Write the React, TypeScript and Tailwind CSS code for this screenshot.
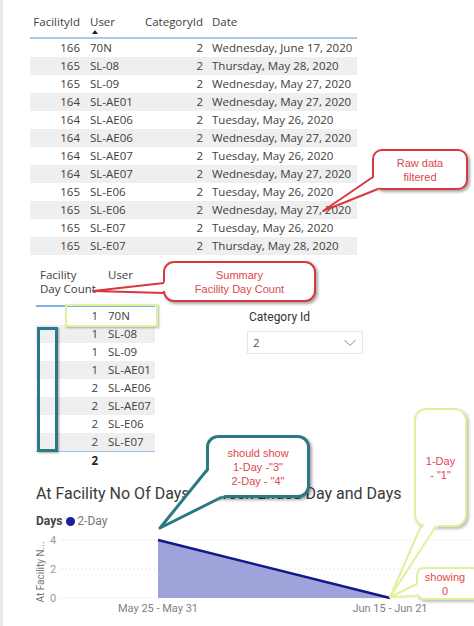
import React from "react";

const raw: string[][] = [
  ["166", "70N", "2", "Wednesday, June 17, 2020"],
  ["165", "SL-08", "2", "Thursday, May 28, 2020"],
  ["165", "SL-09", "2", "Wednesday, May 27, 2020"],
  ["164", "SL-AE01", "2", "Wednesday, May 27, 2020"],
  ["164", "SL-AE06", "2", "Tuesday, May 26, 2020"],
  ["164", "SL-AE06", "2", "Wednesday, May 27, 2020"],
  ["164", "SL-AE07", "2", "Tuesday, May 26, 2020"],
  ["164", "SL-AE07", "2", "Wednesday, May 27, 2020"],
  ["165", "SL-E06", "2", "Tuesday, May 26, 2020"],
  ["165", "SL-E06", "2", "Wednesday, May 27, 2020"],
  ["165", "SL-E07", "2", "Tuesday, May 26, 2020"],
  ["165", "SL-E07", "2", "Thursday, May 28, 2020"],
];

const summary: string[][] = [
  ["1", "70N"],
  ["1", "SL-08"],
  ["1", "SL-09"],
  ["1", "SL-AE01"],
  ["2", "SL-AE06"],
  ["2", "SL-AE07"],
  ["2", "SL-E06"],
  ["2", "SL-E07"],
];

function Tail({
  b1,
  b2,
  apex,
  color,
  width,
}: {
  b1: [number, number];
  b2: [number, number];
  apex: [number, number];
  color: string;
  width: number;
}) {
  return (
    <g>
      <polygon
        points={`${b1[0] + 3},${b1[1] - 1} ${apex[0]},${apex[1]} ${b2[0] + 3},${b2[1] - 2}`}
        fill="#ffffff"
      />
      <polyline
        points={`${b1[0]},${b1[1]} ${apex[0]},${apex[1]} ${b2[0]},${b2[1]}`}
        fill="none"
        stroke={color}
        strokeWidth={width}
        strokeLinejoin="round"
      />
    </g>
  );
}

export default function App() {
  return (
    <div className="relative w-[474px] h-[626px] overflow-hidden bg-white flex font-['Open_Sans',sans-serif] text-[#404040]">
      <div className="w-[3px] h-full bg-[#e8e8e8] shrink-0" />
      <div className="flex flex-col flex-1">
        {/* Raw data table */}
        <div className="ml-[27px] pt-[12px] w-[327px] text-[11.5px]">
          <div className="grid grid-cols-[54px_56px_68px_149px] h-[25px] leading-[16px] pt-[2px]">
            <div className="text-right pr-[4px]">FacilityId</div>
            <div className="pl-[6px] flex flex-col">
              <span>User</span>
              <span className="ml-[2px] w-0 h-0 border-l-[3px] border-r-[3px] border-b-[4px] border-l-transparent border-r-transparent border-b-[#222]" />
            </div>
            <div className="text-right pr-[5px]">CategoryId</div>
            <div className="pl-[4px]">Date</div>
          </div>
          <div className="h-[2px] bg-[#a9c9e8]" />
          {raw.map((r, i) => (
            <div
              key={i}
              className={`grid grid-cols-[54px_56px_68px_149px] h-[18px] leading-[18px] ${
                i % 2 === 1 ? "bg-[#efefef]" : "bg-white"
              }`}
            >
              <div className="text-right pr-[4px]">{r[0]}</div>
              <div className="pl-[6px]">{r[1]}</div>
              <div className="text-right pr-[5px]">{r[2]}</div>
              <div className="pl-[4px] whitespace-nowrap">{r[3]}</div>
            </div>
          ))}
        </div>

        {/* Summary table + slicer */}
        <div className="flex mt-[11px]">
          <div className="ml-[33px] w-[119px] text-[11.5px]">
            <div className="grid grid-cols-[67px_52px] h-[39px] leading-[14px] pt-[2px]">
              <div className="pl-[4px]">
                Facility
                <br />
                Day Count
              </div>
              <div className="pl-[5px]">User</div>
            </div>
            <div className="h-[2px] bg-[#7fb2e2]" />
            {summary.map((r, i) => (
              <div
                key={i}
                className={`grid grid-cols-[67px_52px] h-[18px] leading-[18px] ${
                  i % 2 === 1 ? "bg-[#efefef]" : "bg-white"
                }`}
              >
                <div className="text-right pr-[5px]">{r[0]}</div>
                <div className="pl-[5px]">{r[1]}</div>
              </div>
            ))}
            <div className="h-[1px] bg-[#9cc3e5]" />
            <div className="grid grid-cols-[67px_52px] h-[18px] leading-[18px] font-bold text-[#222]">
              <div className="text-right pr-[5px]">2</div>
              <div />
            </div>
          </div>
          <div className="ml-[92px] mt-[43px] flex flex-col">
            <div className="text-[12px] leading-[16px] font-['Roboto',sans-serif] text-[#333] pl-[2px]">
              Category Id
            </div>
            <div className="mt-[6px] w-[116px] h-[23px] border border-[#e6e6e6] flex items-center justify-between pl-[5px] pr-[6px] text-[11.5px] text-[#555]">
              <span>2</span>
              <svg width="12" height="8" viewBox="0 0 12 8">
                <path d="M0.5 1 L6 6.5 L11.5 1" fill="none" stroke="#8a8a8a" strokeWidth="1" />
              </svg>
            </div>
          </div>
        </div>

        {/* Chart */}
        <div className="ml-[33px] mt-[14px] flex flex-col">
          <div className="text-[16px] leading-[20px] font-['Roboto',sans-serif] text-[#3a3a3a] whitespace-nowrap">
            At Facility No Of Days by Week Ended Day and Days
          </div>
          <div className="mt-[9px] h-[16px] flex items-center text-[12px] font-['Roboto',sans-serif]">
            <span className="font-bold text-[#444]">Days</span>
            <span className="ml-[4px] w-[9px] h-[9px] rounded-full bg-[#1b1f9a]" />
            <span className="ml-[2px] text-[#777]">2-Day</span>
          </div>
          <svg width="438" height="98" className="mt-[-1px]">
            <text
              x="0"
              y="0"
              transform="translate(8 44) rotate(-90)"
              textAnchor="middle"
              fontSize="10"
              fill="#777"
              fontFamily="Roboto, sans-serif"
            >
              At Facility N...
            </text>
            {[
              [12, "4"],
              [41, "2"],
              [70, "0"],
            ].map(([y, l]) => (
              <g key={l as string}>
                <line
                  x1="26"
                  x2="438"
                  y1={y as number}
                  y2={y as number}
                  stroke="#d2d2d2"
                  strokeWidth="1"
                  strokeDasharray="1 3"
                />
                <text
                  x="17"
                  y={(y as number) + 4}
                  textAnchor="middle"
                  fontSize="11"
                  fill="#999"
                  fontFamily="Roboto, sans-serif"
                >
                  {l}
                </text>
              </g>
            ))}
            <polygon points="122,12 354,70 122,70" fill="#9ea3da" />
            <line x1="122" y1="12" x2="354" y2="70" stroke="#16168c" strokeWidth="2.5" />
            <text x="122" y="84" textAnchor="middle" fontSize="11" fill="#808080" fontFamily="Roboto, sans-serif">
              May 25 - May 31
            </text>
            <text x="354" y="84" textAnchor="middle" fontSize="11" fill="#808080" fontFamily="Roboto, sans-serif">
              Jun 15 - Jun 21
            </text>
          </svg>
        </div>
      </div>

      {/* Annotation overlays */}
      <div className="absolute left-[65px] top-[304px] w-[93px] h-[23px] border-2 border-[#e2f09e] shadow-[1px_1px_2px_rgba(0,0,0,0.3)]" />
      <div className="absolute left-[37px] top-[327px] w-[21px] h-[125px] border-[3px] border-[#2b7983] shadow-[1px_1px_2px_rgba(0,0,0,0.35)]" />

      <div className="absolute left-[372px] top-[149px] w-[96px] h-[41px] rounded-[10px] border-2 border-[#d8383e] bg-white shadow-[2px_2px_3px_rgba(0,0,0,0.35)] flex flex-col items-center justify-center text-[11px] leading-[14px] text-[#e0474c] font-['Liberation_Sans',Arial,sans-serif]">
        <span>Raw data</span>
        <span>filtered</span>
      </div>

      <div className="absolute left-[163px] top-[261px] w-[153px] h-[41px] rounded-[11px] border-2 border-[#d8383e] bg-white shadow-[2px_2px_3px_rgba(0,0,0,0.35)] flex flex-col items-center justify-center text-[11px] leading-[14px] text-[#e0474c] font-['Liberation_Sans',Arial,sans-serif]">
        <span>Summary</span>
        <span>Facility Day Count</span>
      </div>

      <div className="absolute left-[206px] top-[435px] w-[104px] h-[63px] rounded-[12px] border-[3px] border-[#2b7983] bg-white shadow-[2px_2px_3px_rgba(0,0,0,0.35)] flex flex-col items-center justify-center text-[11px] leading-[14px] text-[#e0474c] font-['Liberation_Sans',Arial,sans-serif]">
        <span>should show</span>
        <span>1-Day -"3"</span>
        <span>2-Day - "4"</span>
      </div>

      <div className="absolute left-[414px] top-[408px] w-[53px] h-[119px] rounded-[12px] border-2 border-[#e2f09e] bg-white shadow-[2px_2px_3px_rgba(0,0,0,0.25)] flex flex-col items-center justify-center text-[11px] leading-[14px] text-[#e0474c] font-['Liberation_Sans',Arial,sans-serif]">
        <span>1-Day</span>
        <span>- "1"</span>
      </div>

      <div className="absolute left-[416px] top-[567px] w-[64px] h-[33px] rounded-[8px] border-2 border-[#e2f09e] bg-white shadow-[2px_2px_3px_rgba(0,0,0,0.25)] flex flex-col items-center justify-center pr-[6px] text-[11px] leading-[14px] text-[#e0474c] font-['Liberation_Sans',Arial,sans-serif]">
        <span>showing</span>
        <span>0</span>
      </div>

      <svg className="absolute left-0 top-0 pointer-events-none" width="474" height="626">
        <Tail b1={[373, 177]} b2={[378, 189]} apex={[323, 211]} color="#d8383e" width={2} />
        <Tail b1={[164, 283]} b2={[164, 293]} apex={[93, 291]} color="#d8383e" width={2} />
        <Tail b1={[207, 470]} b2={[222, 497]} apex={[160, 528]} color="#2b7983" width={3} />
        <Tail b1={[421, 526]} b2={[436, 526]} apex={[390, 597]} color="#e2f09e" width={2} />
        <Tail b1={[417, 584]} b2={[417, 596]} apex={[390, 597]} color="#e2f09e" width={2} />
      </svg>
    </div>
  );
}
